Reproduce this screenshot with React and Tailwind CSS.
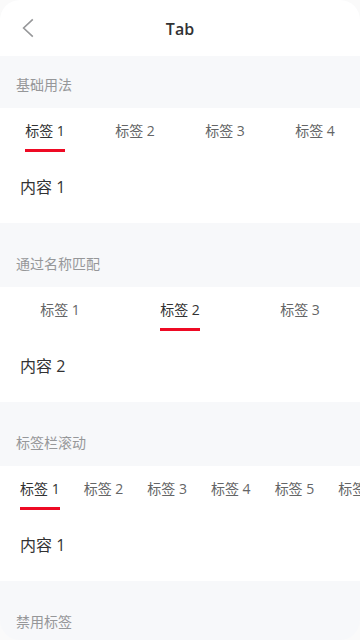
import { useState } from "react";

const font = { fontFamily: '"Open Sans", "Noto Sans CJK SC", sans-serif' };

function Tabs({ tabs, active, onChange, scroll }) {
  return (
    <div className={scroll ? "flex h-[44px] overflow-x-auto pl-[8px]" : "flex h-[44px]"}>
      {tabs.map((t, i) => (
        <button
          key={t}
          type="button"
          onClick={() => onChange(i)}
          className={
            (scroll ? "shrink-0 px-[12px] " : "flex-1 ") +
            "relative flex items-center justify-center whitespace-nowrap text-[14px] leading-5 " +
            (i === active ? "text-[#323233]" : "text-[#646566]")
          }
        >
          <span className="relative pt-[1px]">{t}</span>
          {i === active ? (
            <span className="absolute bottom-0 left-1/2 h-[3px] w-[40px] -translate-x-1/2 bg-[#ee0a24]" />
          ) : null}
        </button>
      ))}
    </div>
  );
}

function Block({ title, pt, children }) {
  return (
    <div>
      <h2 className={"px-[16px] pb-[13px] text-[14px] font-normal leading-5 text-[#969799] " + pt}>{title}</h2>
      {children ? <div className="bg-white">{children}</div> : null}
    </div>
  );
}

function Panel({ children }) {
  return <div className="px-[20px] py-[24px] text-[16px] leading-[23px] text-[#323233]">{children}</div>;
}

export default function App() {
  const [a, setA] = useState(0);
  const [b, setB] = useState(1);
  const [c, setC] = useState(0);
  const four = ["标签 1", "标签 2", "标签 3", "标签 4"];
  const three = ["标签 1", "标签 2", "标签 3"];
  const eight = ["标签 1", "标签 2", "标签 3", "标签 4", "标签 5", "标签 6", "标签 7", "标签 8"];

  return (
    <div className="h-[640px] w-[360px] bg-[#fafafa]" style={font}>
      <div className="h-full overflow-hidden rounded-[20px] bg-[#f7f8fa]">
        <div className="relative flex h-[56px] items-center justify-center bg-white">
          <svg className="absolute left-[20px] top-[16px]" width="18" height="24" viewBox="0 0 18 24">
            <path d="M12.8 3.3 L3.6 12 L12.8 20.6" fill="none" stroke="#969799" strokeWidth="1.6" />
          </svg>
          <span className="pt-[1px] text-[16px] font-semibold text-[#323233]">Tab</span>
        </div>

        <Block title="基础用法" pt="pt-[19px]">
          <Tabs tabs={four} active={a} onChange={setA} />
          <Panel>内容 {a + 1}</Panel>
        </Block>

        <Block title="通过名称匹配" pt="pt-[31px]">
          <Tabs tabs={three} active={b} onChange={setB} />
          <Panel>内容 {b + 1}</Panel>
        </Block>

        <Block title="标签栏滚动" pt="pt-[31px]">
          <Tabs tabs={eight} active={c} onChange={setC} scroll />
          <Panel>内容 {c + 1}</Panel>
        </Block>

        <Block title="禁用标签" pt="pt-[31px]" />
      </div>
    </div>
  );
}
